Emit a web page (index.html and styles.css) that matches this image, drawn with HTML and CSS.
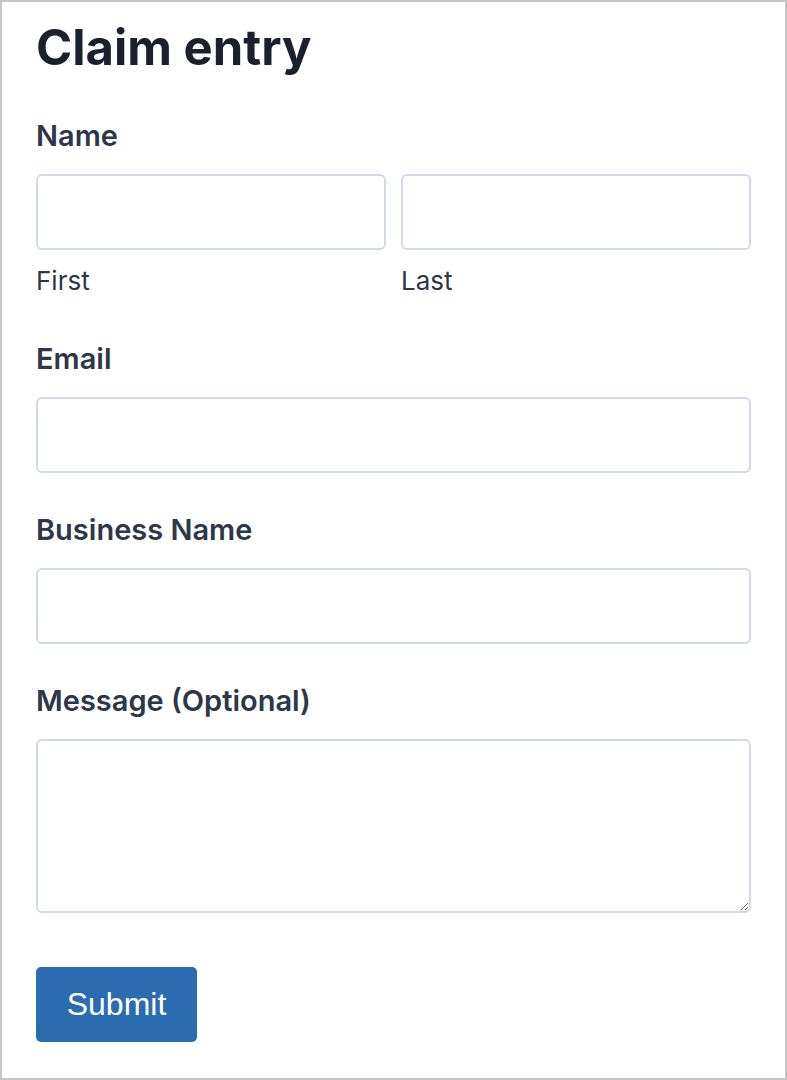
FILE: index.html
```html
<!DOCTYPE html>
<html lang="en">
<head>
<meta charset="utf-8">
<title>Claim entry</title>
<link rel="stylesheet" href="styles.css">
</head>
<body>
<div class="frame">
  <h1 class="title">Claim entry</h1>
  <form class="form">
    <div class="field field-name">
      <div class="label">Name</div>
      <div class="name-row">
        <div class="sub">
          <input class="input" type="text">
          <span class="sublabel">First</span>
        </div>
        <div class="sub">
          <input class="input" type="text">
          <span class="sublabel">Last</span>
        </div>
      </div>
    </div>
    <div class="field field-after-name">
      <div class="label">Email</div>
      <input class="input" type="email">
    </div>
    <div class="field">
      <div class="label">Business Name</div>
      <input class="input" type="text">
    </div>
    <div class="field">
      <div class="label">Message (Optional)</div>
      <textarea class="textarea"></textarea>
    </div>
    <button class="submit" type="button">Submit</button>
  </form>
</div>
</body>
</html>
```
FILE: styles.css
```css
html, body {
  margin: 0;
  padding: 0;
  background: #ffffff;
}
.frame {
  box-sizing: border-box;
  width: 787px;
  height: 1080px;
  border: 2px solid #c6c6c6;
  padding: 0 34px;
  font-family: Inter, "Liberation Sans", sans-serif;
}
.title {
  margin: 16px 0 0;
  font-size: 49px;
  line-height: 59px;
  font-weight: 700;
  color: #1a202c;
}
.form {
  display: flex;
  flex-direction: column;
}
.field {
  display: flex;
  flex-direction: column;
  margin-top: 39px;
}
.field-name {
  margin-top: 41px;
}
.field-after-name {
  margin-top: 44px;
}
.label {
  font-size: 29px;
  line-height: 35px;
  font-weight: 600;
  color: #2d3748;
  margin-bottom: 21px;
}
.name-row {
  display: grid;
  grid-template-columns: 1fr 1fr;
  column-gap: 15px;
}
.sub {
  display: flex;
  flex-direction: column;
}
.sublabel {
  font-size: 26px;
  line-height: 32px;
  color: #2d3748;
  margin-top: 15px;
}
.input, .textarea {
  box-sizing: border-box;
  width: 100%;
  height: 76px;
  margin: 0;
  border: 2px solid #d2dae5;
  border-radius: 6px;
  background: #fff;
  font: inherit;
}
.textarea {
  height: 174px;
  resize: vertical;
}
.submit {
  align-self: flex-start;
  margin-top: 54px;
  width: 161px;
  height: 75px;
  border: none;
  border-radius: 5px;
  background: #2b6cb0;
  color: #fff;
  font-family: "Liberation Sans", Arial, sans-serif;
  font-size: 32px;
}
```
